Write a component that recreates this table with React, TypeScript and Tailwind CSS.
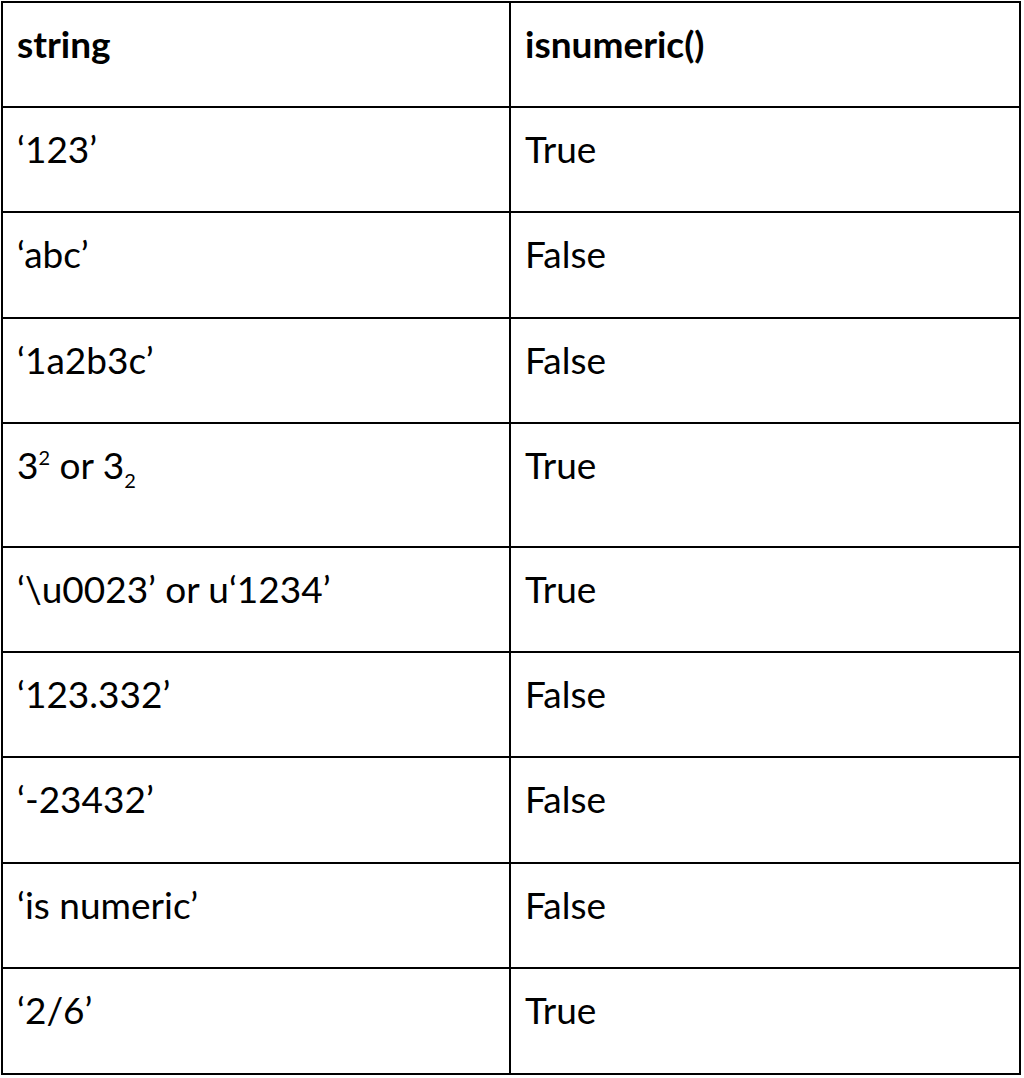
const rows: { s: React.ReactNode; v: string; h: string }[] = [
	{ s: "‘123’", v: "True", h: "h-[105px]" },
	{ s: "‘abc’", v: "False", h: "h-[106px]" },
	{ s: "‘1a2b3c’", v: "False", h: "h-[105px]" },
	{
		s: (
			<>
				3<sup className="text-[20px] -top-[14px]">2</sup> or 3
				<sub className="text-[20px] -bottom-[9px]">2</sub>
			</>
		),
		v: "True",
		h: "h-[124px]",
	},
	{ s: "‘\\u0023’ or u‘1234’", v: "True", h: "h-[105px]" },
	{ s: "‘123.332’", v: "False", h: "h-[105px]" },
	{ s: "‘-23432’", v: "False", h: "h-[106px]" },
	{ s: "‘is numeric’", v: "False", h: "h-[105px]" },
	{ s: "‘2/6’", v: "True", h: "h-[104px]" },
];

function Row({
	left,
	right,
	h,
	last,
	bold,
}: {
	left: React.ReactNode;
	right: React.ReactNode;
	h: string;
	last?: boolean;
	bold?: boolean;
}) {
	return (
		<div className={`flex ${h} ${last ? "" : "border-b-2 border-black"}`}>
			<div
				className={`w-[508px] shrink-0 border-r-2 border-black pl-[14px] pt-[22px] ${bold ? "font-bold" : ""}`}
			>
				{left}
			</div>
			<div className={`flex-1 pl-[14px] pt-[22px] ${bold ? "font-bold" : ""}`}>
				{right}
			</div>
		</div>
	);
}

export default function App() {
	return (
		<div className="bg-white w-[1024px] h-[1078px] pt-[1px] pl-[1px]">
			<div
				className="w-[1020px] border-2 border-black text-black text-[37px] leading-none"
				style={{ fontFamily: "Lato, 'Liberation Sans', sans-serif" }}
			>
				<Row left="string" right="isnumeric()" h="h-[105px]" bold />
				{rows.map((r, i) => (
					<Row key={i} left={r.s} right={r.v} h={r.h} last={i === rows.length - 1} />
				))}
			</div>
		</div>
	);
}
